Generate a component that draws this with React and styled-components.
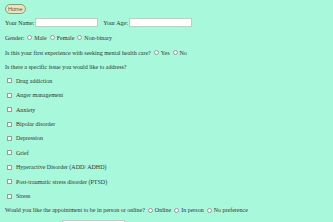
import React from 'react'
import styled, { createGlobalStyle } from 'styled-components'

const GlobalStyle = createGlobalStyle`
  html, body {
    margin: 0;
    background: #a8f8dc;
  }
  body {
    font-family: 'Liberation Serif', 'Times New Roman', serif;
    font-size: 6px;
    color: #333;
  }
`

const Page = styled.div`
  padding: 4px 5px;
  display: flex;
  flex-direction: column;
  align-items: flex-start;
`

const HomeButton = styled.button`
  font-family: 'Liberation Sans', Arial, sans-serif;
  font-size: 5.5px;
  color: #6a4a7a;
  background: #e6e8b4;
  border: 1.5px solid #8a9a80;
  border-radius: 5px;
  padding: 1px 2px;
  height: 10px;
  line-height: 6px;
`

const Row = styled.div`
  display: flex;
  align-items: center;
  height: 9px;
  margin-top: ${p => p.top || 6}px;
  white-space: nowrap;
`

const Label = styled.span`
  margin-right: 1px;
`

const TextInput = styled.input`
  width: 63px;
  height: 9px;
  box-sizing: border-box;
  border: 1px solid #c8c8c8;
  background: #fff;
  padding: 0;
  margin: 0 5px 0 0;
`

const Radio = styled.span`
  display: inline-block;
  width: 3px;
  height: 3px;
  border-radius: 50%;
  border: 0.6px solid #999;
  background: #fff;
  margin: 0 2px 0 3px;
`

const Box = styled.span`
  display: inline-block;
  width: 3px;
  height: 3px;
  border: 0.6px solid #999;
  border-radius: 0.6px;
  background: #fff;
  margin: 0 4px 0 2px;
`

const Bottom = styled.div`
  margin-top: 5px;
  margin-left: 57px;
  width: 63px;
  height: 9px;
  border: 1px solid #c8c8c8;
  background: #fff;
  box-sizing: border-box;
`

const issues = [
  'Drug addiction',
  'Anger management',
  'Anxiety',
  'Bipolar disorder',
  'Depression',
  'Grief',
  'Hyperactive Disorder (ADD/ ADHD)',
  'Post-traumatic stress disorder (PTSD)',
  'Stress',
]

export default function App() {
  return (
    <>
      <GlobalStyle />
      <Page>
        <HomeButton>Home</HomeButton>
        <Row top={4}>
          <Label>Your Name:</Label>
          <TextInput />
          <Label>Your Age:</Label>
          <TextInput />
        </Row>
        <Row>
          Gender:<Radio />Male<Radio />Female<Radio />Non-binary
        </Row>
        <Row>
          Is this your first experience with seeking mental health care?
          <Radio />Yes<Radio />No
        </Row>
        <Row top={5}>Is there a specific issue you would like to address?</Row>
        {issues.map(issue => (
          <Row key={issue} top={5.4}>
            <Box />
            {issue}
          </Row>
        ))}
        <Row top={5.2}>
          Would you like the appointment to be in person or online?
          <Radio />Online<Radio />In person<Radio />No preference
        </Row>
        <Bottom />
      </Page>
    </>
  )
}
